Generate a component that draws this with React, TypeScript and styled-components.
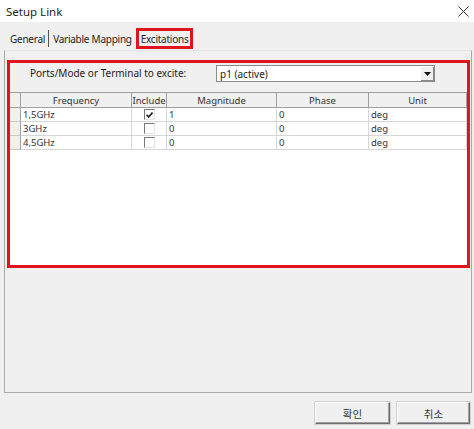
import styled, { createGlobalStyle } from 'styled-components'

const GlobalStyle = createGlobalStyle`
  *, *::before, *::after {
    box-sizing: border-box;
  }
  html, body {
    margin: 0;
    padding: 0;
    background: #f0f0f0;
  }
  body {
    font-family: "Noto Sans", "Noto Sans CJK KR", sans-serif;
    color: #1e1e1e;
  }
`

const Window = styled.div`
  width: 474px;
  height: 429px;
  display: flex;
  flex-direction: column;
  background: #f0f0f0;
  overflow: hidden;
`

const TitleBar = styled.div`
  height: 22px;
  width: 474px;
  flex: none;
  background: #ffffff;
  display: flex;
  align-items: center;
  padding: 0 5px 0 6px;
  font-size: 11.5px;
  color: #222;
`

const Title = styled.span`
  flex: 1;
`

const CloseButton = styled.div`
  width: 12px;
  height: 12px;
  display: flex;
  align-items: center;
  justify-content: center;
`

const Body = styled.div`
  flex: 1;
  display: flex;
  flex-direction: column;
  padding: 0 2px 0 4px;
`

const TabStrip = styled.div`
  height: 28px;
  flex: none;
  display: flex;
  align-items: flex-start;
  padding: 6px 0 0 6px;
  font-size: 10px;
  letter-spacing: -0.25px;
`

const Tab = styled.div<{ $active?: boolean }>`
  height: 21px;
  display: flex;
  align-items: center;
  padding: 0 ${(p) => (p.$active ? '2px' : '0')};
  border: ${(p) => (p.$active ? '3px solid #e0141c' : 'none')};
  margin-left: ${(p) => (p.$active ? '4px' : '0')};
  color: #222;
`

const TabSeparator = styled.div`
  width: 1px;
  height: 17px;
  background: #555;
  margin: 2px 4px 0 3px;
`

const Panel = styled.div`
  height: 343px;
  flex: none;
  border: 1px solid #a9a9a9;
  border-top-color: #e6e6e6;
  padding: 9px 1px 0 2px;
`

const Highlight = styled.div`
  height: 208px;
  border: 3px solid #e0141c;
  display: flex;
  flex-direction: column;
`

const PortRow = styled.div`
  height: 29px;
  flex: none;
  display: flex;
  align-items: flex-start;
  padding: 2px 0 0 20px;
  font-size: 10px;
  color: #222;
`

const PortLabel = styled.div`
  width: 186px;
  height: 17px;
  line-height: 17px;
`

const Select = styled.div`
  width: 219px;
  height: 17px;
  background: #fff;
  border: 1px solid #8a8a8a;
  display: flex;
  align-items: center;
  justify-content: space-between;
  padding-left: 3px;
  font-size: 10px;
`

const SelectArrow = styled.div`
  width: 14px;
  height: 15px;
  background: #f0f0f0;
  border-left: 1px solid #fff;
  border-top: 1px solid #fff;
  box-shadow: inset -1px -1px 0 #8a8a8a;
  display: flex;
  align-items: center;
  justify-content: center;
`

const Grid = styled.div`
  flex: 1;
  background: #fff;
  display: grid;
  grid-template-columns: 11px 111px 35px 110px 92px 1fr;
  grid-template-rows: 15px;
  grid-auto-rows: 14px;
  align-content: start;
  font-size: 9.5px;
  border-top: 1px solid #a0a0a0;
`

const HeaderCell = styled.div`
  background: #f0f0f0;
  border-right: 1px solid #a0a0a0;
  border-bottom: 1px solid #a0a0a0;
  display: flex;
  align-items: center;
  justify-content: center;
  color: #333;
`

const RowHeader = styled.div`
  background: #f0f0f0;
  border-right: 1px solid #a0a0a0;
  border-bottom: 1px solid #c8c8c8;
`

const Cell = styled.div<{ $center?: boolean }>`
  border-right: 1px solid #d6d6d6;
  border-bottom: 1px solid #d6d6d6;
  display: flex;
  align-items: center;
  justify-content: ${(p) => (p.$center ? 'center' : 'flex-start')};
  padding-left: ${(p) => (p.$center ? '0' : '2px')};
  color: #333;
`

const CheckBox = styled.div`
  width: 11px;
  height: 11px;
  border-top: 1px solid #777;
  border-left: 1px solid #777;
  border-right: 1px solid #e4e4e4;
  border-bottom: 1px solid #e4e4e4;
  display: flex;
  align-items: center;
  justify-content: center;
  background: #fff;
`

const Footer = styled.div`
  flex: 1;
  display: flex;
  justify-content: flex-end;
  align-items: flex-start;
  gap: 7px;
  padding: 9px 2px 0 0;
`

const Button = styled.div<{ $width: number }>`
  width: ${(p) => p.$width}px;
  height: 22px;
  background: #f0f0f0;
  border-top: 1px solid #fff;
  border-left: 1px solid #fff;
  border-right: 1px solid #6d6d6d;
  border-bottom: 1px solid #6d6d6d;
  box-shadow: inset -1px -1px 0 #a0a0a0, 0 0 0 1px #d0d0d0;
  display: flex;
  align-items: center;
  justify-content: center;
  font-family: "Noto Sans CJK KR", sans-serif;
  font-size: 10.5px;
  color: #333;
`

const rows = [
  { freq: '1,5GHz', include: true, mag: '1', phase: '0', unit: 'deg' },
  { freq: '3GHz', include: false, mag: '0', phase: '0', unit: 'deg' },
  { freq: '4,5GHz', include: false, mag: '0', phase: '0', unit: 'deg' },
]

export default function App() {
  return (
    <>
      <GlobalStyle />
      <Window>
        <TitleBar>
          <Title>Setup Link</Title>
          <CloseButton>
            <svg width="11" height="11" viewBox="0 0 11 11">
              <path d="M0.5 0.5 L10.5 10.5 M10.5 0.5 L0.5 10.5" stroke="#333" strokeWidth="1" fill="none" />
            </svg>
          </CloseButton>
        </TitleBar>
        <Body>
          <TabStrip>
            <Tab>General</Tab>
            <TabSeparator />
            <Tab>Variable Mapping</Tab>
            <Tab $active>Excitations</Tab>
          </TabStrip>
          <Panel>
            <Highlight>
              <PortRow>
                <PortLabel>Ports/Mode or Terminal to excite:</PortLabel>
                <Select>
                  <span>p1 (active)</span>
                  <SelectArrow>
                    <svg width="7" height="4" viewBox="0 0 7 4">
                      <path d="M0 0 H7 L3.5 4 Z" fill="#111" />
                    </svg>
                  </SelectArrow>
                </Select>
              </PortRow>
              <Grid>
                <HeaderCell />
                <HeaderCell>Frequency</HeaderCell>
                <HeaderCell>Include</HeaderCell>
                <HeaderCell>Magnitude</HeaderCell>
                <HeaderCell>Phase</HeaderCell>
                <HeaderCell>Unit</HeaderCell>
                {rows.map((r) => (
                  <>
                    <RowHeader key={r.freq + 'h'} />
                    <Cell>{r.freq}</Cell>
                    <Cell $center>
                      <CheckBox>
                        {r.include && (
                          <svg width="7" height="6" viewBox="0 0 7 6">
                            <path d="M0.5 2.8 L2.6 5 L6.5 0.6" stroke="#111" strokeWidth="1.5" fill="none" />
                          </svg>
                        )}
                      </CheckBox>
                    </Cell>
                    <Cell>{r.mag}</Cell>
                    <Cell>{r.phase}</Cell>
                    <Cell>{r.unit}</Cell>
                  </>
                ))}
              </Grid>
            </Highlight>
          </Panel>
          <Footer>
            <Button $width={75}>확인</Button>
            <Button $width={73}>취소</Button>
          </Footer>
        </Body>
      </Window>
    </>
  )
}
